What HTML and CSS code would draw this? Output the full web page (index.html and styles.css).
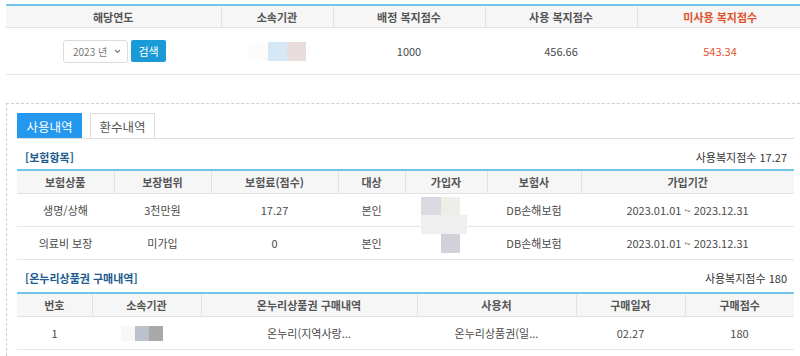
FILE: index.html
```html
<!DOCTYPE html>
<html lang="ko">
<head>
<meta charset="utf-8">
<link rel="stylesheet" href="styles.css">
</head>
<body>
<div class="wrap">
  <table class="grid top">
    <colgroup><col style="width:215px"><col style="width:112px"><col style="width:152px"><col style="width:152px"><col style="width:166px"></colgroup>
    <thead>
      <tr><th>해당연도</th><th>소속기관</th><th>배정 복지점수</th><th>사용 복지점수</th><th class="red">미사용 복지점수</th></tr>
    </thead>
    <tbody>
      <tr>
        <td>
          <div class="search">
            <div class="select"><span>2023 년</span><svg width="7" height="5" viewBox="0 0 7 5"><path d="M1 1 L3.5 3.5 L6 1" fill="none" stroke="#777" stroke-width="1.1"/></svg></div>
            <button class="btn">검색</button>
          </div>
        </td>
        <td><div class="blur"><i style="background:#fdfcfa"></i><i style="background:#d6e8f5"></i><i style="background:#e8dcdc"></i></div></td>
        <td>1000</td>
        <td>456.66</td>
        <td class="red">543.34</td>
      </tr>
    </tbody>
  </table>

  <div class="box">
    <div class="tabs">
      <div class="tab active">사용내역</div>
      <div class="tab">환수내역</div>
    </div>

    <div class="sec-head"><span class="sec-title">[보험항목]</span><span class="sec-sum">사용복지점수 17.27</span></div>
    <table class="grid sub">
      <colgroup><col style="width:97px"><col style="width:97px"><col style="width:127px"><col style="width:67px"><col style="width:82px"><col style="width:94px"><col style="width:213px"></colgroup>
      <thead>
        <tr><th>보험상품</th><th>보장범위</th><th>보험료(점수)</th><th>대상</th><th>가입자</th><th>보험사</th><th>가입기간</th></tr>
      </thead>
      <tbody>
        <tr><td>생명/상해</td><td>3천만원</td><td>17.27</td><td>본인</td><td class="anon"><div class="mask"><i class="m1"></i><i class="m2"></i><i class="m3"></i><i class="m4"></i></div></td><td>DB손해보험</td><td>2023.01.01 ~ 2023.12.31</td></tr>
        <tr><td>의료비 보장</td><td>미가입</td><td>0</td><td>본인</td><td></td><td>DB손해보험</td><td>2023.01.01 ~ 2023.12.31</td></tr>
      </tbody>
    </table>

    <div class="sec-head second"><span class="sec-title">[온누리상품권 구매내역]</span><span class="sec-sum">사용복지점수 180</span></div>
    <table class="grid sub">
      <colgroup><col style="width:75px"><col style="width:109px"><col style="width:216px"><col style="width:159px"><col style="width:109px"><col style="width:109px"></colgroup>
      <thead>
        <tr><th>번호</th><th>소속기관</th><th>온누리상품권 구매내역</th><th>사용처</th><th>구매일자</th><th>구매점수</th></tr>
      </thead>
      <tbody>
        <tr><td>1</td><td><div class="blur small"><i style="background:#f7f7f5"></i><i style="background:#bcc2cc"></i><i style="background:#a9a9a9"></i></div></td><td>온누리(지역사랑...</td><td>온누리상품권(일...</td><td>02.27</td><td>180</td></tr>
      </tbody>
    </table>
  </div>
</div>
</body>
</html>
```

FILE: styles.css
```css
html, body {
  margin: 0;
  padding: 0;
  overflow: hidden;
  background: #fff;
}
body {
  font-family: "Noto Sans CJK KR", "Noto Sans", sans-serif;
  font-size: 11px;
  color: #4a4a4a;
  width: 820px;
}
.wrap {
  padding: 4px 0 0 6px;
}
.grid {
  border-collapse: collapse;
  table-layout: fixed;
  border-top: 2px solid #72c4e8;
}
.grid th {
  background: #f6f6f6;
  font-weight: 600;
  color: #555;
  border-left: 1px solid #e2e2e2;
  border-bottom: 1px solid #e2e2e2;
  text-align: center;
  padding: 0;
}
.grid th:first-child { border-left: none; }
.grid td {
  text-align: center;
  border-bottom: 1px solid #e6e6e6;
  padding: 0;
}
.top { width: 797px; }
.top th { height: 21px; }
.top td { height: 46px; }
.red { color: #e0532b !important; }

.search {
  display: flex;
  justify-content: center;
  gap: 3px;
  padding-left: 2px;
}
.select {
  box-sizing: border-box;
  width: 65px;
  height: 23px;
  border: 1px solid #dcdcdc;
  border-radius: 3px;
  display: flex;
  align-items: center;
  justify-content: space-between;
  padding: 0 6px 0 9px;
  color: #777;
  font-size: 10px;
}
.btn {
  width: 35px;
  height: 22px;
  border: none;
  border-radius: 2px;
  background: #1a9bd7;
  color: #fff;
  font-family: inherit;
  font-size: 11px;
  padding: 0;
}
.blur {
  display: flex;
  justify-content: center;
}
.blur i {
  display: block;
  width: 19px;
  height: 19px;
}
.blur.small { padding-right: 10px; }
.blur.small i { width: 14px; height: 15px; }

.box {
  margin-top: 28px;
  border: 1px dashed #cfcfcf;
  padding: 9px 10px 20px;
  width: 777px;
}
.tabs {
  display: flex;
  gap: 8px;
  border-bottom: 1px solid #dddddd;
}
.tab {
  box-sizing: border-box;
  width: 65px;
  height: 25px;
  border: 1px solid #dddddd;
  border-bottom: none;
  display: flex;
  align-items: center;
  justify-content: center;
  font-size: 12.5px;
  color: #555;
}
.tab.active {
  background: #2497ef;
  border-color: #2497ef;
  color: #fff;
}
.sec-head {
  height: 30px;
  display: flex;
  align-items: center;
  justify-content: space-between;
  padding: 5px 7px 0 8px;
  box-sizing: border-box;
}
.sec-head.second { height: 32px; padding-top: 4px; }
.sec-title {
  color: #225c8e;
  font-weight: 600;
}
.sec-sum {
  color: #333;
  font-size: 11px;
}
.sub { width: 777px; }
.sub th { height: 22px; }
.sub td { height: 32px; }
.anon { position: relative; }
.mask {
  position: absolute;
  left: 16px;
  top: 3px;
  width: 46px;
  height: 56px;
}
.mask i { position: absolute; display: block; }
.mask .m1 { left: 0; top: 0; width: 20px; height: 18px; background: #dcd9e2; }
.mask .m2 { left: 20px; top: 0; width: 19px; height: 18px; background: #eeeee9; }
.mask .m3 { left: 0; top: 18px; width: 46px; height: 19px; background: #efefef; }
.mask .m4 { left: 20px; top: 37px; width: 19px; height: 19px; background: #d3d0da; }
```
